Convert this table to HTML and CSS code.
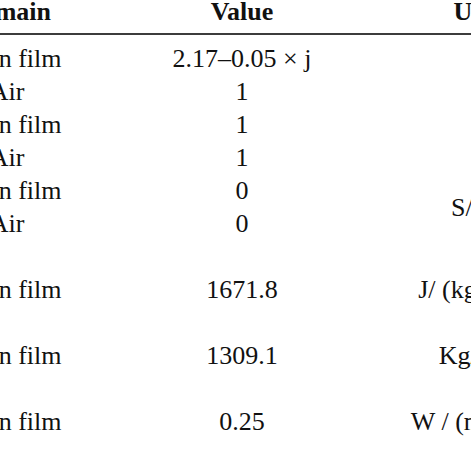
FILE: index.html
```html
<!DOCTYPE html>
<html lang="en">
<head>
<meta charset="utf-8">
<title>Material parameters</title>
<link rel="stylesheet" href="styles.css">
</head>
<body>
<table class="params">
  <colgroup>
    <col class="c-domain">
    <col class="c-value">
    <col class="c-unit">
  </colgroup>
  <thead>
    <tr>
      <th>Domain</th>
      <th>Value</th>
      <th class="h-unit">Unit</th>
    </tr>
  </thead>
  <tbody>
    <tr class="first">
      <td>Resin film</td>
      <td>2.17–0.05 × j</td>
      <td rowspan="2"></td>
    </tr>
    <tr>
      <td>Air</td>
      <td>1</td>
    </tr>
    <tr>
      <td>Resin film</td>
      <td>1</td>
      <td rowspan="2"></td>
    </tr>
    <tr>
      <td>Air</td>
      <td>1</td>
    </tr>
    <tr>
      <td>Resin film</td>
      <td>0</td>
      <td rowspan="2" class="mid">S/m</td>
    </tr>
    <tr>
      <td>Air</td>
      <td>0</td>
    </tr>
    <tr class="spaced">
      <td>Resin film</td>
      <td>1671.8</td>
      <td>J/ (kg · K)</td>
    </tr>
    <tr class="spaced">
      <td>Resin film</td>
      <td>1309.1</td>
      <td>Kg/m<sup>3</sup></td>
    </tr>
    <tr class="spaced">
      <td>Resin film</td>
      <td>0.25</td>
      <td>W / (m · K)</td>
    </tr>
  </tbody>
</table>
</body>
</html>
```

FILE: styles.css
```css
html, body {
  margin: 0;
  padding: 0;
  background: #ffffff;
  overflow: hidden;
}

body {
  width: 471px;
  height: 471px;
  font-family: "Liberation Serif", "DejaVu Serif", serif;
  color: #111111;
}

.params {
  border-collapse: collapse;
  table-layout: fixed;
  width: 600px;
  margin-left: -63px;
  margin-top: -5px;
  font-family: "Liberation Serif", "DejaVu Serif", serif;
  font-size: 26px;
  line-height: 33px;
}

.c-domain { width: 140px; }
.c-value { width: 330px; }
.c-unit { width: 130px; }

.params th,
.params td {
  padding: 0;
  text-align: center;
  white-space: nowrap;
  vertical-align: top;
}

.params th {
  font-weight: bold;
  padding-bottom: 5px;
  border-bottom: 2px solid #3c3c3c;
}

.params th.h-unit {
  padding-left: 12px;
}

.params tr.first td {
  padding-top: 7px;
}

.params td.mid {
  vertical-align: middle;
}

.params tr.spaced td {
  padding-top: 33px;
}

.params sup {
  font-size: 15px;
  line-height: 0;
}
```
